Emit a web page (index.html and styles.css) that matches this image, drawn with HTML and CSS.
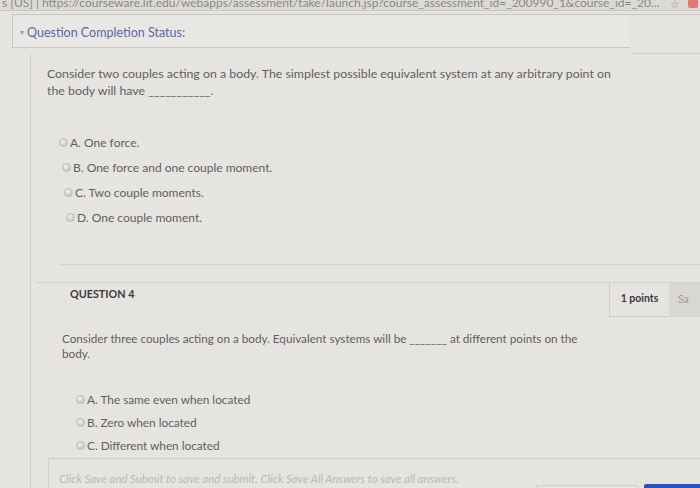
FILE: index.html
```html
<!DOCTYPE html>
<html>
<head>
<meta charset="utf-8">
<link rel="stylesheet" href="styles.css">
</head>
<body>
<div class="urlbar">
  <div class="urltext">s [US] | https://courseware.lit.edu/webapps/assessment/take/launch.jsp?course_assessment_id=_200990_1&amp;course_id=_20...</div>
  <div class="urlicons"><span class="star">☆</span><span class="ext"></span></div>
</div>
<div class="status-row">
  <div class="status"><span class="caret">▾</span>Question Completion Status:</div>
  <div class="status-side"></div>
</div>
<div class="content">
  <div class="q3">
    <p class="qtext">Consider two couples acting on a body. The simplest possible equivalent system at any arbitrary point on the body will have ___________.</p>
    <ul class="options q3opts">
      <li><span class="radio"></span>A. One force.</li>
      <li><span class="radio"></span>B. One force and one couple moment.</li>
      <li><span class="radio"></span>C. Two couple moments.</li>
      <li><span class="radio"></span>D. One couple moment.</li>
    </ul>
    <div class="sep"></div>
  </div>
  <div class="q4">
    <div class="q4head">
      <div class="qtitle">QUESTION 4</div>
      <div class="points">1 points</div>
      <div class="savebtn">Sa</div>
    </div>
    <div class="q4body">
      <p class="qtext small">Consider three couples acting on a body. Equivalent systems will be _______ at different points on the body.</p>
      <ul class="options q4opts">
        <li><span class="radio"></span>A. The same even when located</li>
        <li><span class="radio"></span>B. Zero when located</li>
        <li><span class="radio"></span>C. Different when located</li>
      </ul>
    </div>
    <div class="footer">
      <span class="hint">Click Save and Submit to save and submit. Click Save All Answers to save all answers.</span>
      <span class="btn-outline">Save All Answers</span>
      <span class="btn-blue">Save and Submit</span>
    </div>
  </div>
</div>
</body>
</html>
```
FILE: styles.css
```css
html, body {
  margin: 0;
  padding: 0;
}
body {
  width: 700px;
  height: 488px;
  overflow: hidden;
  background: #e6e4e0;
  font-family: Lato, "Open Sans", sans-serif;
  color: #6a6a6a;
}
.urlbar {
  height: 10px;
  overflow: hidden;
  background: #dcdad6;
  border-bottom: 1px solid #c9c6c1;
  display: flex;
  justify-content: space-between;
}
.urltext {
  font-size: 12px;
  line-height: 12px;
  margin-top: -3px;
  margin-left: 2px;
  color: #8a8884;
  white-space: nowrap;
}
.urlicons {
  display: flex;
  gap: 8px;
  margin-top: -2px;
  padding-right: 2px;
}
.star { font-size: 11px; color: #9a9894; line-height: 12px; }
.ext { width: 10px; height: 10px; background: #e07a72; border-radius: 2px; }
.status-row {
  display: flex;
  margin-top: 3px;
}
.status {
  margin-left: 12px;
  flex: 1;
  height: 34px;
  border: 1px solid #cac7c2;
  border-right: none;
  background: #e9e7e3;
  box-sizing: border-box;
  padding-left: 7px;
  padding-top: 10px;
  font-size: 12.5px;
  color: #5a67a6;
}
.caret {
  font-size: 8px;
  color: #999;
  margin-right: 3px;
  vertical-align: 2px;
}
.status-side {
  width: 70px;
  height: 40px;
  border-bottom: 1px solid #d2cfca;
  border-top: 1px solid #cac7c2;
  box-sizing: border-box;
}
.content {
  margin-left: 30px;
  border-left: 1px solid #d2cfca;
}
.q3 {
  padding-top: 11px;
}
.qtext {
  margin: 0;
  padding-left: 16px;
  width: 572px;
  font-size: 12.35px;
  line-height: 17px;
  color: #5f5f5f;
}
.options {
  list-style: none;
  margin: 0;
  padding: 0;
}
.options li {
  display: flex;
  align-items: center;
  font-size: 12px;
  color: #5f5f5f;
}
.radio {
  width: 9px;
  height: 9px;
  border-radius: 50%;
  background: radial-gradient(circle at 40% 35%, #f2f2f2 0%, #c9c9c9 70%, #b0b0b0 100%);
  border: 1px solid #bdbdbd;
  box-sizing: border-box;
  margin-right: 2px;
}
.q3opts {
  margin-top: 36px;
  padding-left: 28px;
  display: flex;
  flex-direction: column;
  gap: 10px;
}
.q3opts li { height: 15px; }
.q3opts li:nth-child(2) { padding-left: 3px; }
.q3opts li:nth-child(3) { padding-left: 5px; }
.q3opts li:nth-child(4) { padding-left: 7px; }
.sep {
  margin-top: 39px;
  margin-left: 28px;
  border-top: 1px solid #d4d1cc;
}
.q4 {
  margin-top: 17px;
  margin-left: 4px;
  border-top: 1px solid #d4d1cc;
}
.q4head {
  display: flex;
  align-items: flex-start;
  height: 36px;
}
.qtitle {
  flex: 1;
  padding-left: 35px;
  padding-top: 4px;
  font-size: 10.8px;
  font-weight: bold;
  color: #3a3a3a;
}
.points {
  width: 60px;
  height: 35px;
  box-sizing: border-box;
  border-left: 1px solid #cfccc7;
  border-bottom: 1px solid #cfccc7;
  margin-top: -1px;
  border-top: 1px solid #d4d1cc;
  text-align: center;
  padding-top: 9px;
  font-size: 10.5px;
  font-weight: bold;
  color: #3a3a3a;
}
.savebtn {
  width: 31px;
  height: 34px;
  box-sizing: border-box;
  background: #d9d7d3;
  padding-top: 10px;
  padding-left: 9px;
  font-size: 10.5px;
  color: #9a9894;
}
.q4body {
  padding-top: 12px;
}
.q4body .qtext {
  padding-left: 27px;
  width: 522px;
  font-size: 11.7px;
  line-height: 15px;
}
.q4opts {
  margin-top: 31px;
  padding-left: 41px;
  display: flex;
  flex-direction: column;
  gap: 8px;
}
.q4opts li { height: 15px; font-size: 11.8px; }
.footer {
  margin-top: 5px;
  margin-left: 13px;
  border-top: 1px solid #cfd0c8;
  border-left: 1px solid #cfd0c8;
  height: 40px;
  display: flex;
  align-items: flex-start;
  gap: 6px;
  overflow: hidden;
}
.hint {
  flex: 1;
  font-size: 11.4px;
  font-style: italic;
  color: #b8b9b4;
  white-space: nowrap;
  padding-left: 10px;
  margin-top: 13px;
  overflow: hidden;
}
.btn-outline {
  width: 100px;
  height: 16px;
  margin-top: 26px;
  border: 1px solid #cfd0c8;
  font-size: 9px;
  color: #aaa;
  overflow: hidden;
  line-height: 16px;
  text-align: center;
}
.btn-blue {
  width: 56px;
  height: 16px;
  margin-top: 25px;
  background: #1f55c4;
  border-radius: 2px 0 0 0;
  font-size: 9px;
  color: #fff;
  overflow: hidden;
  line-height: 16px;
  text-align: center;
}
```
